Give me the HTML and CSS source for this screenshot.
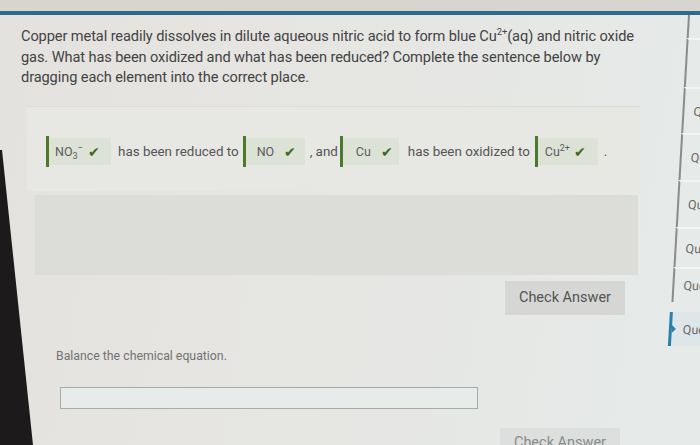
FILE: index.html
```html
<!DOCTYPE html>
<html>
<head>
<meta charset="utf-8">
<link rel="stylesheet" href="styles.css">
</head>
<body>
<div class="page">
  <div class="topstrip"></div>
  <div class="rule"></div>
  <div class="content">
    <div class="main">
      <p class="question">Copper metal readily dissolves in dilute aqueous nitric acid to form blue Cu<sup>2+</sup>(aq) and nitric oxide gas. What has been oxidized and what has been reduced? Complete the sentence below by dragging each element into the correct place.</p>
      <div class="sentence-box">
        <div class="sentence">
          <span class="slot"><span class="bar"></span><span class="chip chip-no3"><span class="ion">NO<sub>3</sub><sup>−</sup></span><span class="check">✔</span></span></span>
          <span class="word w1">has been reduced to</span>
          <span class="slot"><span class="bar"></span><span class="chip chip-no">NO<span class="check">✔</span></span></span>
          <span class="word w2">, and</span>
          <span class="slot"><span class="bar"></span><span class="chip chip-cu">Cu<span class="check">✔</span></span></span>
          <span class="word w3">has been oxidized to</span>
          <span class="slot"><span class="bar"></span><span class="chip chip-cu2"><span class="ion">Cu<sup>2+</sup></span><span class="check">✔</span></span></span>
          <span class="word w4">.</span>
        </div>
      </div>
      <div class="pool"></div>
      <div class="check-row"><button class="btn">Check Answer</button></div>
      <p class="balance">Balance the chemical equation.</p>
      <div class="input"></div>
      <div class="check-row2"><button class="btn btn2">Check Answer</button></div>
    </div>
    <div class="side">
      <div class="line">
        <div class="item h1"></div>
        <div class="item h2"></div>
        <div class="item h3"><span class="lbl">Question 1</span></div>
        <div class="item h4"><span class="lbl">Question 2</span></div>
        <div class="item h4"><span class="lbl">Question 3</span></div>
        <div class="item h5"><span class="lbl">Question 4</span></div>
        <div class="item h6"><span class="lbl">Question 5</span></div>
        <div class="item active"><span class="notch"></span><span class="lbl">Question 6</span></div>
      </div>
    </div>
  </div>
  <div class="bezel"></div>
</div>
</body>
</html>
```

FILE: styles.css
```css
html, body {
  margin: 0;
  padding: 0;
}
body {
  width: 700px;
  height: 445px;
  overflow: hidden;
  background: #e6e6e3;
  font-family: Roboto, "Liberation Sans", sans-serif;
}
.page {
  position: relative;
  width: 700px;
  height: 445px;
  overflow: hidden;
  background: linear-gradient(100deg, #e4e2de 0%, #e6e6e3 50%, #e6ebe9 100%);
}
.topstrip {
  height: 11px;
  background: #d8d5cf;
}
.rule {
  height: 4px;
  background: #2e6a8c;
}
.content {
  display: flex;
}
.main {
  width: 668px;
  flex: none;
}
.question {
  margin: 11px 0 0 21px;
  width: 630px;
  font-size: 14.6px;
  line-height: 20.5px;
  color: #434343;
  letter-spacing: -0.1px;
}
.question sup {
  font-size: 9.5px;
  line-height: 0;
  vertical-align: 6px;
}
.sentence-box {
  margin: 18px 0 0 27px;
  width: 613px;
  height: 84px;
  border-top: 1px solid #dcdcd9;
  background: #e7e7e4;
  display: flex;
  align-items: center;
}
.sentence {
  display: flex;
  align-items: center;
  padding-left: 19px;
  margin-top: 6px;
  font-size: 13.4px;
  color: #555;
}
.slot {
  display: flex;
  align-items: center;
}
.bar {
  width: 3px;
  height: 31px;
  background: #4c7a2b;
}
.chip {
  display: flex;
  align-items: center;
  height: 27px;
  background: #dde2d6;
  color: #5c5c5c;
  font-size: 12.5px;
}
.ion sub, .ion sup {
  font-size: 9px;
  line-height: 0;
}
.ion sub { vertical-align: -3px; }
.ion sup { vertical-align: 5px; }
.check {
  color: #3a6b1a;
  font-size: 13.5px;
  margin-left: 5px;
}
.chip-no3 { width: 56px; padding-left: 6px; }
.chip-no { width: 48px; padding-left: 11px; }
.chip-cu { width: 43px; padding-left: 13px; }
.chip-cu2 { width: 53px; padding-left: 7px; }
.chip-no .check, .chip-cu .check { margin-left: 10px; }
.chip-cu2 .check { margin-left: 4px; }
.w1 { margin: 0 4px 0 7px; }
.w2 { margin: 0 2px 0 5px; }
.w3 { margin: 0 5px 0 9px; }
.w4 { margin-left: 6px; }
.pool {
  margin: 4px 0 0 35px;
  width: 603px;
  height: 80px;
  background: #dcdcd9;
}
.check-row {
  display: flex;
  justify-content: flex-end;
  padding-right: 43px;
  margin-top: 6px;
}
.btn {
  width: 120px;
  height: 34px;
  border: none;
  background: #d6d7d5;
  color: #545454;
  font-family: Roboto, "Liberation Sans", sans-serif;
  font-size: 14.5px;
  padding: 0;
}
.balance {
  margin: 34px 0 0 56px;
  font-size: 12.3px;
  color: #727272;
}
.input {
  margin: 24px 0 0 60px;
  width: 416px;
  height: 20px;
  border: 1px solid #a9abab;
  background: #e7ebea;
}
.check-row2 {
  display: flex;
  justify-content: flex-end;
  padding-right: 48px;
  margin-top: 19px;
}
.btn2 {
  height: 30px;
  background: #dcdfde;
  color: #8a8c8c;
  line-height: 14px;
  padding-top: 0;
}
.side {
  flex: 1;
  position: relative;
}
.line {
  position: absolute;
  left: 20px;
  top: 0;
  width: 80px;
  transform: skewX(-3.3deg);
  transform-origin: top left;
}
.item {
  border-left: 2px solid #8b8b8b;
  border-top: 2px solid #f3f3f1;
  display: flex;
  align-items: center;
  position: relative;
  box-sizing: border-box;
}
.h1 { height: 23px; border-top: none; }
.h2 { height: 49px; }
.h3 { height: 46px; }
.h4 { height: 47px; }
.h5 { height: 40px; }
.h6 { height: 35px; }
.lbl {
  font-size: 12.5px;
  color: #6a6a6a;
  margin-left: 9px;
  white-space: nowrap;
}
.active {
  height: 34px;
  margin-top: 10px;
  border-top: none;
  border-left: 3px solid #2b7fad;
  background: #dfe6ea;
  margin-left: -1px;
}
.active .lbl { margin-left: 11px; }
.notch {
  position: absolute;
  left: 0;
  top: 13px;
  width: 0;
  height: 0;
  border-top: 4px solid transparent;
  border-bottom: 4px solid transparent;
  border-left: 4px solid #2b7fad;
}
.bezel {
  position: absolute;
  left: 0;
  top: 0;
  width: 40px;
  height: 445px;
  background: #1c1a1a;
  clip-path: polygon(0 150px, 2px 150px, 33px 445px, 0 445px);
}
```
